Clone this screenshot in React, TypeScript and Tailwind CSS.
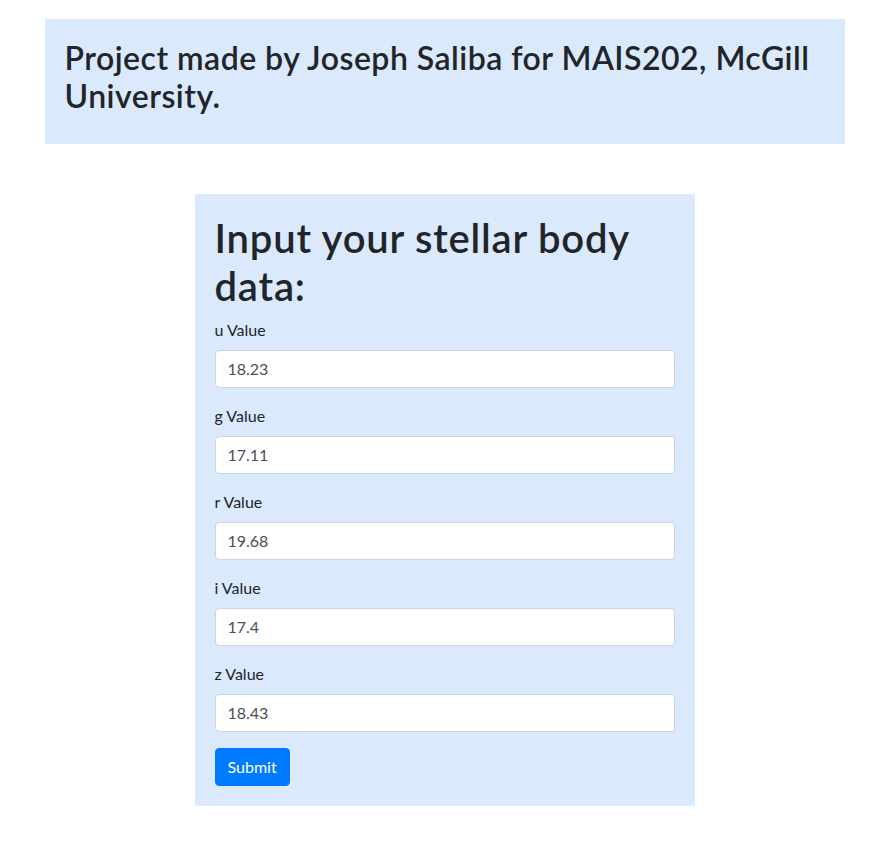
const fields = [
    { label: "u Value", value: "18.23" },
    { label: "g Value", value: "17.11" },
    { label: "r Value", value: "19.68" },
    { label: "i Value", value: "17.4" },
    { label: "z Value", value: "18.43" },
];

export default function App() {
    return (
        <div
            className="min-h-screen bg-white text-[#212529] pt-[19px] pb-10"
            style={{ fontFamily: 'Lato, "Noto Sans", sans-serif' }}
        >
            <div className="mx-auto w-[800px] bg-[#dbe9fd] p-5">
                <h2 className="text-[32px] leading-[1.2] font-semibold tracking-[0.015em] mb-2">
                    Project made by Joseph Saliba for MAIS202, McGill
                    University.
                </h2>
            </div>
            <form
                className="mx-auto mt-[50px] w-[500px] bg-[#dbe9fd] p-5"
                onSubmit={(e) => e.preventDefault()}
            >
                <h1 className="text-[40px] leading-[1.2] font-semibold tracking-[0.02em] mb-2">
                    Input your stellar body data:
                </h1>
                {fields.map((field) => (
                    <div key={field.label} className="mb-4">
                        <label className="block text-base leading-6 mb-2">
                            {field.label}
                        </label>
                        <input
                            type="text"
                            defaultValue={field.value}
                            className="block w-full h-[38px] px-3 py-1.5 text-base leading-6 text-[#495057] bg-white border border-[#ced4da] rounded"
                        />
                    </div>
                ))}
                <button
                    type="submit"
                    className="h-[38px] px-3 text-base leading-6 text-white bg-[#007bff] border border-[#007bff] rounded"
                >
                    Submit
                </button>
            </form>
        </div>
    );
}
